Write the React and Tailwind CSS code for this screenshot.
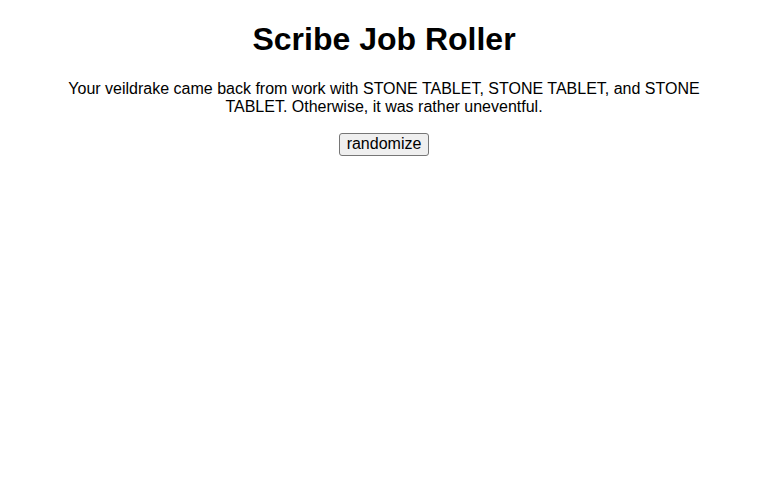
import React, { useState } from 'react';

const ITEMS = ['STONE TABLET', 'STONE TABLET', 'STONE TABLET'];

export default function App() {
  const [items] = useState(ITEMS);

  return (
    <div className="min-h-screen bg-white px-2 text-center text-black font-['Liberation_Sans',Arial,sans-serif]">
      <h1 className="pt-[21.44px] pb-[21.44px] text-[32px] font-bold leading-[36.8px]">Scribe Job Roller</h1>
      <p className="mx-auto max-w-[680px] text-base leading-[18.4px]">
        Your veildrake came back from work with {items[0]}, {items[1]}, and {items[2]}. Otherwise, it was rather uneventful.
      </p>
      <div className="pt-4">
        <button className="rounded-[3px] border border-[#767676] bg-[#efefef] px-[7px] py-[1px] text-base leading-[18.4px] hover:bg-[#e5e5e5]">
          randomize
        </button>
      </div>
    </div>
  );
}
